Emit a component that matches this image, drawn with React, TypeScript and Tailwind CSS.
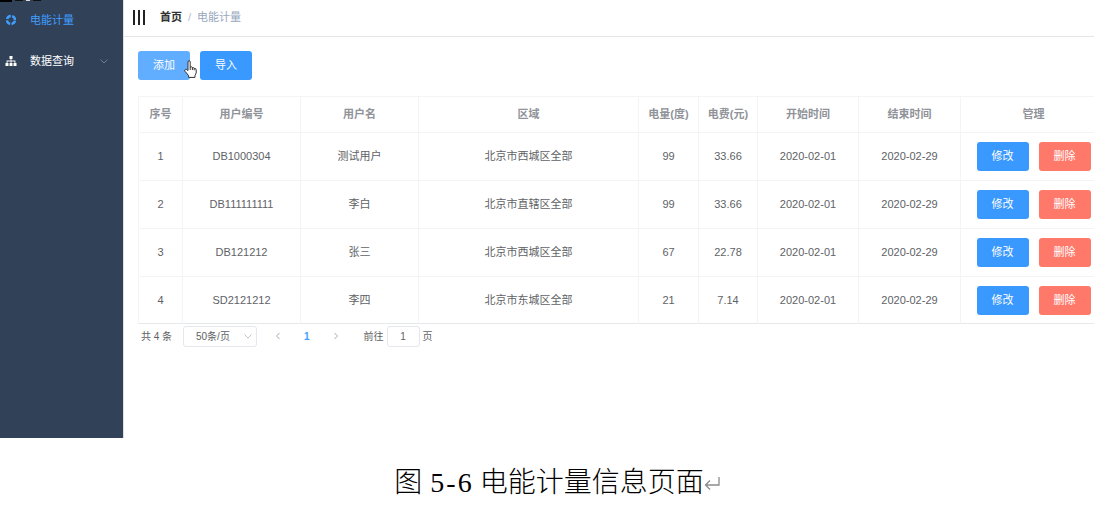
import React from "react";

type Reading = {
  id: number;
  code: string;
  name: string;
  area: string;
  usage: string;
  fee: string;
  start: string;
  end: string;
};

const readings: Reading[] = [
  { id: 1, code: "DB1000304", name: "测试用户", area: "北京市西城区全部", usage: "99", fee: "33.66", start: "2020-02-01", end: "2020-02-29" },
  { id: 2, code: "DB111111111", name: "李白", area: "北京市直辖区全部", usage: "99", fee: "33.66", start: "2020-02-01", end: "2020-02-29" },
  { id: 3, code: "DB121212", name: "张三", area: "北京市西城区全部", usage: "67", fee: "22.78", start: "2020-02-01", end: "2020-02-29" },
  { id: 4, code: "SD2121212", name: "李四", area: "北京市东城区全部", usage: "21", fee: "7.14", start: "2020-02-01", end: "2020-02-29" },
];

const columns = [
  { title: "序号", width: "w-[44px]" },
  { title: "用户编号", width: "w-[118px]" },
  { title: "用户名", width: "w-[118px]" },
  { title: "区域", width: "" },
  { title: "电量(度)", width: "w-[60px]" },
  { title: "电费(元)", width: "w-[59px]" },
  { title: "开始时间", width: "w-[101px]" },
  { title: "结束时间", width: "w-[102px]" },
  { title: "管理", width: "w-[146px]" },
];

const buttonBase = "h-[29px] w-[52px] rounded-[3px] text-[11px] text-white";

function Chevron({ className, d }: { className: string; d: string }) {
  return (
    <svg viewBox="0 0 8 8" className={className} fill="none" stroke="currentColor" aria-hidden="true">
      <path d={d} />
    </svg>
  );
}

function Sidebar() {
  return (
    <aside className="w-[123px] shrink-0 bg-[#304158] text-[11px]">
      {/* Lower edge of the brand strip */}
      <div className="flex h-[2px] gap-[3px]">
        <span className="h-[2px] w-3 bg-black" />
        <span className="h-[1px] w-2 bg-[#111]" />
        <span className="h-[1px] w-1 bg-[#ddd]" />
        <span className="h-[1px] w-2 bg-[#111]" />
      </div>
      <nav>
        <a href="#metering" className="flex h-9 items-center pl-[5px] text-[#409eff]">
          <svg viewBox="0 0 12 12" className="h-3 w-3" fill="none" stroke="currentColor" aria-hidden="true">
            <circle cx="6" cy="6" r="4" strokeWidth="2.4" strokeDasharray="4.9 1.383" strokeDashoffset="-0.7" />
          </svg>
          <span className="ml-[13px]">电能计量</span>
        </a>
        <a href="#query" className="mt-[5px] flex h-9 items-center pl-[5px] text-white">
          <svg viewBox="0 0 12 12" className="h-3 w-3" fill="currentColor" aria-hidden="true">
            <path d="M4.500 1h3v3H6.400v1.600H10.400V8H11.500v3H8.500V8H9.500V6.500H6.400V8H7.500v3H4.500V8H5.600V6.500H2.500V8H3.500v3H.5V8H1.600V5.600H5.600V4H4.500z" />
          </svg>
          <span className="ml-[13px]">数据查询</span>
          <Chevron className="ml-[26px] h-2 w-2 text-[#728096]" d="M.5 2.5 4 6l3.500-3.500" />
        </a>
      </nav>
    </aside>
  );
}

function Header() {
  return (
    <header className="flex h-[37px] items-center border-b border-[#e6e6e6] pb-[2px] pl-[9px]">
      <button type="button" aria-label="折叠菜单" className="flex h-[15px] gap-[3px]">
        <span className="w-[2px] bg-[#222]" />
        <span className="w-[2px] bg-[#222]" />
        <span className="w-[2px] bg-[#222]" />
      </button>
      <nav className="ml-[15px] flex items-center text-[11px]">
        <a href="#home" className="font-bold text-[#303133]">首页</a>
        <span className="mx-[6px] text-[#b4bccc]">/</span>
        <span className="text-[#97a8be]">电能计量</span>
      </nav>
    </header>
  );
}

function ReadingTable() {
  return (
    <table className="w-full table-fixed border-separate border-spacing-0 border-t border-l border-[#f2f4f5] text-center text-[11px] text-[#606266]">
      <thead>
        <tr className="h-9 text-[#909399]">
          {columns.map((column) => (
            <th key={column.title} className={`${column.width} border-r border-b border-[#f2f4f5] p-0 font-bold whitespace-nowrap`}>
              {column.title}
            </th>
          ))}
        </tr>
      </thead>
      <tbody>
        {readings.map((row) => (
          <tr key={row.id} className="h-12 last:h-[47px] [&>td]:border-r [&>td]:border-b [&>td]:border-[#f2f4f5] [&>td]:p-0 last:[&>td]:border-b-[#e6e9ec]">
            <td>{row.id}</td>
            <td>{row.code}</td>
            <td>{row.name}</td>
            <td>{row.area}</td>
            <td>{row.usage}</td>
            <td>{row.fee}</td>
            <td>{row.start}</td>
            <td>{row.end}</td>
            <td>
              <div className="flex justify-center gap-[10px]">
                <button type="button" className={`${buttonBase} bg-[#3a99ff]`}>修改</button>
                <button type="button" className={`${buttonBase} bg-[#ff796b]`}>删除</button>
              </div>
            </td>
          </tr>
        ))}
      </tbody>
    </table>
  );
}

function Pagination() {
  return (
    <div className="mt-[1px] flex h-[22px] items-center pl-[3px] text-[10px] text-[#606266]">
      <span className="w-[42px] whitespace-nowrap">共 4 条</span>
      <div className="relative">
        <select aria-label="每页条数" className="block h-[21px] w-[74px] appearance-none rounded-[3px] border border-[#e4e7ed] bg-white pl-3 text-[10px]">
          <option>50条/页</option>
        </select>
        <Chevron className="pointer-events-none absolute top-[6px] right-[5px] h-2 w-2 text-[#c0c4cc]" d="M.5 2.5 4 6l3.500-3.500" />
      </div>
      <button type="button" aria-label="上一页" className="ml-[17px] text-[#a8abb2]">
        <Chevron className="h-2 w-2" d="M5.500 1 2.500 4l3 3" />
      </button>
      <button type="button" className="mx-[22px] font-bold text-[#409eff]">1</button>
      <button type="button" aria-label="下一页" className="text-[#a8abb2]">
        <Chevron className="h-2 w-2" d="m2.500 1 3 3-3 3" />
      </button>
      <label htmlFor="page" className="ml-6">前往</label>
      <input id="page" defaultValue="1" className="mx-[3px] h-[21px] w-[33px] rounded-[3px] border border-[#e4e7ed] text-center" />
      <span>页</span>
    </div>
  );
}

export default function App() {
  return (
    <div className="bg-white font-['Liberation_Sans','Noto_Sans_CJK_SC',sans-serif]">
      <div className="flex min-h-[438px] overflow-hidden">
        <Sidebar />
        <main className="min-w-0 flex-1 border-l border-[#dcdfe6]">
          <Header />
          <div className="-mr-[13px] pt-[14px] pl-[14px]">
            <div className="mb-4 flex gap-[10px]">
              <div className="relative">
                <button type="button" className={`${buttonBase} block bg-[#61adff]`}>添加</button>
                {/* Hand pointer over the hovered button */}
                <svg viewBox="0 0 13 18" className="pointer-events-none absolute top-[9px] left-[46px] h-[18px] w-[13px]" fill="white" stroke="#333" strokeLinejoin="round" aria-hidden="true">
                  <path d="M4 10.500V2q0-1.300 1.100-1.300T6.200 2v5q1.900-.8 2.200.7 1.500-.6 1.800.7 2-.3 2 1.600v3l-1.200 2.400v2H4.600v-1.800L1 11.300q-.8-1.500.4-1.900Q2.600 9.100 4 10.500z" />
                  <path d="M6.200 7v3M8.400 7.700V10M10.200 8.400V10.300" fill="none" />
                </svg>
              </div>
              <button type="button" className={`${buttonBase} bg-[#3a99ff]`}>导入</button>
            </div>
            <ReadingTable />
            <Pagination />
          </div>
        </main>
      </div>
      <p className="flex items-center justify-center pt-[25px] pl-5 font-['Liberation_Serif','Noto_Sans_CJK_SC',serif] text-[28px] leading-10 font-light text-black">
        <span>图</span>
        <span className="mx-2 flex gap-[2px]">
          <span>5</span>
          <span>-</span>
          <span>6</span>
        </span>
        <span>电能计量信息页面</span>
        <svg viewBox="0 0 16 14" className="h-[14px] w-4" fill="none" stroke="#8c8c8c" strokeWidth="1.300" aria-hidden="true">
          <path d="M15 1v8H2M6 4.500 1.500 9 6 13.500" />
        </svg>
      </p>
    </div>
  );
}
